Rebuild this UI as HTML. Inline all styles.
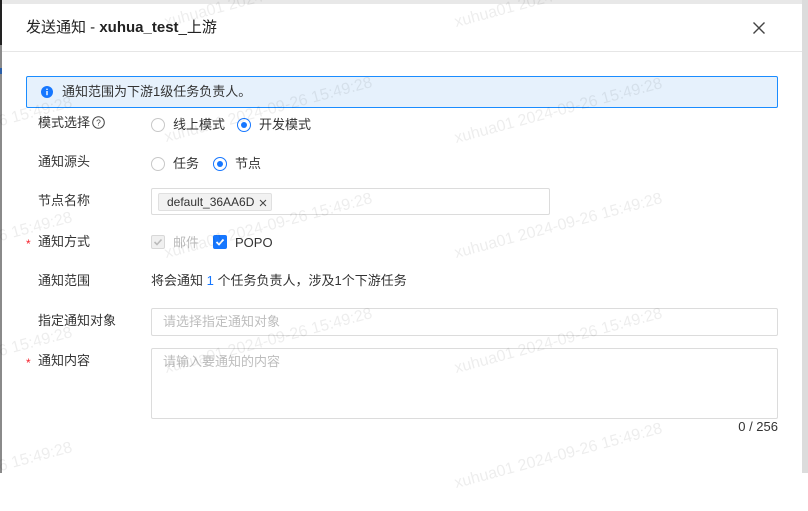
<!DOCTYPE html>
<html><head><meta charset="utf-8"><style>
*{box-sizing:border-box;margin:0;padding:0}
body{width:808px;height:473px;overflow:hidden;background:#fff;font-family:"Liberation Sans","Noto Sans CJK SC",sans-serif;color:#333;position:relative}
.a{position:absolute;white-space:nowrap;line-height:16px}
.lbl{font-size:13px;left:38px;color:#333}
.star{left:26px;color:#f5222d;font-size:12px}
.radio{width:14px;height:14px;border:1px solid #c8c8c8;border-radius:50%;background:#fff}
.radio.on{border-color:#1677ff}
.radio.on::after{content:"";position:absolute;left:3px;top:3px;width:6px;height:6px;border-radius:50%;background:#1677ff}
.t{font-size:13px;color:#333}
.wm{font-size:16px;color:rgba(0,0,0,0.07);transform-origin:0 100%;transform:rotate(-15deg);line-height:16px}
</style></head><body>
<div class="a" style="left:0;top:0;width:808px;height:4px;background:#e8e8e8"></div>
<div class="a" style="left:0;top:0;width:2px;height:45px;background:#222"></div>
<div class="a" style="left:0;top:45px;width:2px;height:428px;background:#8a8a8a"></div>
<div class="a" style="left:0;top:68px;width:2px;height:6px;background:#2b5fa8"></div>
<div class="a" style="left:802px;top:0;width:6px;height:473px;background:#dcdcdc"></div>
<div class="a" style="left:2px;top:4px;width:800px;height:469px;background:#fff"></div>

<div class="a" style="left:26px;top:20px;font-size:15px;color:#222">发送通知 - <b style="font-weight:bold">xuhua_test</b>_上游</div>
<svg class="a" style="left:752px;top:21px" width="14" height="14" viewBox="0 0 14 14"><path d="M1.5 1.5L12.5 12.5M12.5 1.5L1.5 12.5" stroke="#444" stroke-width="1.4"/></svg>
<div class="a" style="left:2px;top:51px;width:800px;height:1px;background:#e6e6e6"></div>

<div class="a" style="left:26px;top:76px;width:752px;height:32px;background:#e6f1fc;border:1px solid #1a8cff;border-radius:2px"></div>
<svg class="a" style="left:41px;top:86px" width="12" height="12" viewBox="0 0 12 12"><circle cx="6" cy="6" r="6" fill="#1677ff"/><rect x="5.3" y="5" width="1.4" height="4.2" fill="#fff"/><circle cx="6" cy="3.3" r="0.8" fill="#fff"/></svg>
<div class="a t" style="left:62px;top:84px">通知范围为下游1级任务负责人。</div>

<div class="a lbl" style="top:115px">模式选择</div>
<svg class="a" style="left:92px;top:116px" width="13" height="13" viewBox="0 0 13 13"><circle cx="6.5" cy="6.5" r="5.8" fill="none" stroke="#444" stroke-width="1"/><text x="6.5" y="9.6" font-size="8.5" text-anchor="middle" fill="#444" font-family="Liberation Sans">?</text></svg>
<div class="a radio" style="left:151px;top:118px"></div><div class="a t" style="left:173px;top:117px">线上模式</div>
<div class="a radio on" style="left:237px;top:118px"></div><div class="a t" style="left:259px;top:117px">开发模式</div>

<div class="a lbl" style="top:154px">通知源头</div>
<div class="a radio" style="left:151px;top:157px"></div><div class="a t" style="left:173px;top:156px">任务</div>
<div class="a radio on" style="left:213px;top:157px"></div><div class="a t" style="left:235px;top:156px">节点</div>

<div class="a lbl" style="top:193px">节点名称</div>
<div class="a" style="left:151px;top:188px;width:399px;height:27px;border:1px solid #dcdcdc;border-radius:2px"></div>
<div class="a" style="left:158px;top:193px;width:114px;height:18px;background:#f2f2f2;border:1px solid #e0e0e0;border-radius:2px"></div>
<div class="a t" style="left:167px;top:194px;font-size:12px">default_36AA6D</div>
<svg class="a" style="left:259px;top:199px" width="8" height="8" viewBox="0 0 8 8"><path d="M1 1L7 7M7 1L1 7" stroke="#444" stroke-width="1"/></svg>

<div class="a star" style="top:236px">*</div>
<div class="a lbl" style="top:234px">通知方式</div>
<div class="a" style="left:151px;top:235px;width:14px;height:14px;background:#f0f0f0;border:1px solid #d8d8d8;border-radius:2px"></div>
<svg class="a" style="left:151px;top:235px" width="14" height="14" viewBox="0 0 14 14"><path d="M3.5 7L6 9.5L10.5 4.5" fill="none" stroke="#bbb" stroke-width="1.6"/></svg>
<div class="a t" style="left:173px;top:235px;color:#bbb">邮件</div>
<div class="a" style="left:213px;top:235px;width:14px;height:14px;background:#1677ff;border-radius:2px"></div>
<svg class="a" style="left:213px;top:235px" width="14" height="14" viewBox="0 0 14 14"><path d="M3.5 7L6 9.5L10.5 4.5" fill="none" stroke="#fff" stroke-width="1.8"/></svg>
<div class="a t" style="left:235px;top:235px">POPO</div>

<div class="a lbl" style="top:273px">通知范围</div>
<div class="a t" style="left:151px;top:273px">将会通知 <span style="color:#1677ff">1</span> 个任务负责人，涉及1个下游任务</div>

<div class="a lbl" style="top:313px">指定通知对象</div>
<div class="a" style="left:151px;top:308px;width:627px;height:28px;border:1px solid #dcdcdc;border-radius:2px"></div>
<div class="a t" style="left:163px;top:314px;color:#bdbdbd">请选择指定通知对象</div>

<div class="a star" style="top:355px">*</div>
<div class="a lbl" style="top:353px">通知内容</div>
<div class="a" style="left:151px;top:348px;width:627px;height:71px;border:1px solid #dcdcdc;border-radius:2px"></div>
<div class="a t" style="left:163px;top:354px;color:#bdbdbd">请输入要通知的内容</div>
<div class="a t" style="right:30px;top:419px;color:#333">0 / 256</div>

<div class="a wm" style="left:167px;top:15px">xuhua01 2024-09-26 15:49:28</div>
<div class="a wm" style="left:167px;top:130px">xuhua01 2024-09-26 15:49:28</div>
<div class="a wm" style="left:167px;top:246px">xuhua01 2024-09-26 15:49:28</div>
<div class="a wm" style="left:167px;top:361px">xuhua01 2024-09-26 15:49:28</div>
<div class="a wm" style="left:457px;top:15px">xuhua01 2024-09-26 15:49:28</div>
<div class="a wm" style="left:457px;top:131px">xuhua01 2024-09-26 15:49:28</div>
<div class="a wm" style="left:457px;top:246px">xuhua01 2024-09-26 15:49:28</div>
<div class="a wm" style="left:457px;top:361px">xuhua01 2024-09-26 15:49:28</div>
<div class="a wm" style="left:457px;top:476px">xuhua01 2024-09-26 15:49:28</div>
<div class="a wm" style="left:-133px;top:150px">xuhua01 2024-09-26 15:49:28</div>
<div class="a wm" style="left:-133px;top:265px">xuhua01 2024-09-26 15:49:28</div>
<div class="a wm" style="left:-133px;top:380px">xuhua01 2024-09-26 15:49:28</div>
<div class="a wm" style="left:-133px;top:495px">xuhua01 2024-09-26 15:49:28</div>
</body></html>
